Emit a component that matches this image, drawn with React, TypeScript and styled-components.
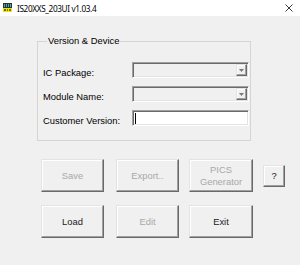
import React from 'react';
import styled, { createGlobalStyle } from 'styled-components';

const Global = createGlobalStyle`
  html, body { margin: 0; padding: 0; }
  body {
    width: 300px;
    height: 265px;
    overflow: hidden;
    background: #ffffff;
    font-family: "Liberation Sans", Arial, sans-serif;
  }
`;

const Window = styled.div`
  width: 300px;
  height: 265px;
  display: flex;
  flex-direction: column;
  background: #ffffff;
`;

const TitleBar = styled.div`
  height: 16px;
  flex-shrink: 0;
  display: flex;
  align-items: center;
  padding: 0 7px 0 3px;
  background: #ffffff;
`;

const TitleText = styled.span`
  flex: 1;
  margin-left: 5px;
  font-family: "Noto Sans", "Open Sans", sans-serif;
  font-size: 8.2px;
  letter-spacing: -0.35px;
  color: #000000;
  white-space: nowrap;
`;

const Body = styled.div`
  flex: 1;
  background: #f0f0f0;
  padding: 19px 0 0 37px;
  display: flex;
  flex-direction: column;
  align-items: flex-start;
`;

const Group = styled.fieldset`
  box-sizing: border-box;
  width: 214px;
  height: 106px;
  margin: 0;
  padding: 0 1px 0 5px;
  border: 1px solid #d5d5d5;
  border-radius: 0;
`;

const GroupTitle = styled.legend`
  padding: 0 1px;
  margin-left: 4px;
  font-size: 9.4px;
  line-height: 12px;
  color: #000000;
`;

const Form = styled.div`
  display: grid;
  grid-template-columns: 89px 117px;
  grid-auto-rows: 16px;
  row-gap: 8px;
  margin-top: 15px;
`;

const Label = styled.span`
  font-size: 9.4px;
  line-height: 16px;
  padding-top: 3px;
  color: #000000;
  white-space: nowrap;
`;

const Sunken = styled.div<{ $white?: boolean }>`
  box-sizing: border-box;
  height: 16px;
  display: flex;
  align-items: stretch;
  justify-content: flex-end;
  padding: 1px;
  background: ${(p) => (p.$white ? '#ffffff' : '#f0f0f0')};
  border: 1px solid;
  border-color: #a0a0a0 #ffffff #ffffff #a0a0a0;
  box-shadow: inset 1px 1px #696969, inset -1px -1px #e3e3e3;
`;

const DropButton = styled.div`
  box-sizing: border-box;
  width: 11px;
  display: flex;
  align-items: center;
  justify-content: center;
  border: 1px solid;
  border-color: #e3e3e3 #696969 #696969 #e3e3e3;
  box-shadow: inset -1px -1px #a0a0a0, inset 1px 1px #ffffff;
  background: #f0f0f0;
`;

const Caret = styled.span`
  width: 1px;
  height: 11px;
  margin: 0 auto 0 1px;
  align-self: center;
  background: #000000;
`;

const Buttons = styled.div`
  display: grid;
  grid-template-columns: 75px 73px 74px 22px;
  grid-auto-rows: 33px;
  row-gap: 13px;
  margin: 18px 0 0 4px;
`;

const Btn = styled.button<{ $w: number; $h?: number }>`
  box-sizing: border-box;
  width: ${(p) => p.$w}px;
  height: ${(p) => p.$h ?? 33}px;
  align-self: center;
  padding: 0;
  margin: 0;
  background: #f0f0f0;
  border: 1px solid;
  border-color: #e3e3e3 #696969 #696969 #e3e3e3;
  box-shadow: inset -1px -1px #a0a0a0, inset 1px 1px #ffffff;
  font-family: "Liberation Sans", Arial, sans-serif;
  font-size: 9.4px;
  font-weight: 400;
  line-height: 12px;
  color: #1a1a1a;
  &:disabled {
    color: #a8a8a8;
  }
`;

const Empty = styled.span``;

const AppIcon = () => (
  <svg width="9" height="10" viewBox="0 0 9 10">
    <rect x="0" y="0" width="9" height="5" fill="#1c3a3a" />
    <rect x="1" y="1" width="1" height="3" fill="#5fa0a0" />
    <rect x="3" y="1" width="1" height="3" fill="#5fa0a0" />
    <rect x="5" y="1" width="1" height="3" fill="#5fa0a0" />
    <rect x="7" y="1" width="1" height="3" fill="#5fa0a0" />
    <rect x="0" y="5" width="9" height="4" fill="#f2e400" />
    <rect x="1" y="6" width="2" height="2" fill="#6b6a20" />
    <rect x="4" y="6" width="1" height="2" fill="#6b6a20" />
    <rect x="6" y="6" width="2" height="2" fill="#6b6a20" />
  </svg>
);

const CloseIcon = () => (
  <svg width="8" height="8" viewBox="0 0 8 8">
    <path d="M0.5 0.5 L7.5 7.5 M7.5 0.5 L0.5 7.5" stroke="#222" strokeWidth="0.9" />
  </svg>
);

const Arrow = () => (
  <svg width="5" height="3" viewBox="0 0 5 3">
    <path d="M0 0 H5 L2.5 3 Z" fill="#7a7a7a" />
  </svg>
);

export default function App() {
  return (
    <>
      <Global />
      <Window>
        <TitleBar>
          <AppIcon />
          <TitleText>IS20XXS_203UI v1.03.4</TitleText>
          <CloseIcon />
        </TitleBar>
        <Body>
          <Group>
            <GroupTitle>Version &amp; Device</GroupTitle>
            <Form>
              <Label>IC Package:</Label>
              <Sunken>
                <DropButton>
                  <Arrow />
                </DropButton>
              </Sunken>
              <Label>Module Name:</Label>
              <Sunken>
                <DropButton>
                  <Arrow />
                </DropButton>
              </Sunken>
              <Label>Customer Version:</Label>
              <Sunken $white>
                <Caret />
              </Sunken>
            </Form>
          </Group>
          <Buttons>
            <Btn $w={63} disabled>Save</Btn>
            <Btn $w={63} disabled>Export..</Btn>
            <Btn $w={64} disabled>PICS<br />Generator</Btn>
            <Btn $w={22} $h={22}>?</Btn>
            <Btn $w={63}>Load</Btn>
            <Btn $w={63} disabled>Edit</Btn>
            <Btn $w={64}>Exit</Btn>
            <Empty />
          </Buttons>
        </Body>
      </Window>
    </>
  );
}
